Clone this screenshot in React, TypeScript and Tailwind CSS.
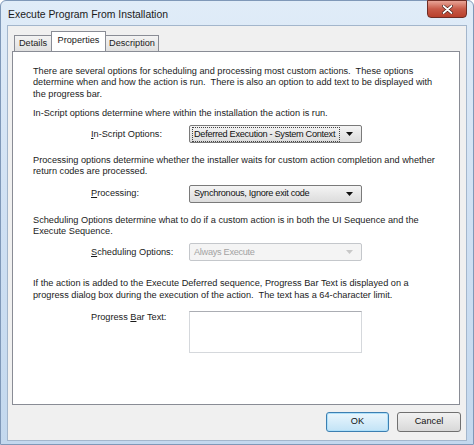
import React from "react";

const font = { fontFamily: '"Liberation Sans", Arial, sans-serif' };

const Combo = ({ value, disabled, focused }: { value: string; disabled?: boolean; focused?: boolean }) => (
  <div
    className={
      "flex items-center w-[173px] h-[18px] rounded-[2px] border pl-[3px] pr-[8px] " +
      (disabled
        ? "border-[#c4c7cb] bg-[#f4f4f4] text-[#a3a3a3]"
        : "border-[#7a7a7a] bg-gradient-to-b from-[#f4f4f4] to-[#dcdcdc] text-[#111]")
    }
  >
    <span
      className={
        "flex-1 min-w-0 overflow-hidden whitespace-nowrap leading-[13px] px-[1px] tracking-[-0.3px] " +
        (focused ? "outline outline-1 outline-dotted outline-[#444]" : "")
      }
    >
      {value}
    </span>
    <svg width="7" height="4" viewBox="0 0 7 4" className="ml-[7px] shrink-0">
      <path d="M0 0h7L3.5 4z" fill={disabled ? "#c8c8c8" : "#111"} />
    </svg>
  </div>
);

const Row = ({ children, label, mt }: { children: React.ReactNode; label: React.ReactNode; mt: string }) => (
  <div className={"flex items-center " + mt}>
    <span className="w-[176px] pl-[78px] whitespace-nowrap">{label}</span>
    {children}
  </div>
);

export default function App() {
  return (
    <div
      className="w-[474px] h-[445px] flex flex-col rounded-t-[6px] border border-[#7f98b8] bg-gradient-to-b from-[#e0ecf8] via-[#cfe0f3] to-[#c3d8ee] text-[9.2px] text-[#1b1b1b]"
      style={font}
    >
      {/* title bar */}
      <div className="flex items-start h-[24px] shrink-0 pl-[7px] pr-[6px]">
        <span className="mt-[6px] text-[10.4px] text-[#1a1a1a]">Execute Program From Installation</span>
        <div className="ml-auto -mt-px w-[40px] h-[18px] rounded-b-[4px] border border-[#6e2c24] bg-gradient-to-b from-[#e8a497] via-[#c85a48] to-[#b8402c] flex items-center justify-center">
          <svg width="11" height="9" viewBox="0 0 11 9">
            <path d="M1.5 1l8 7M9.5 1l-8 7" stroke="#3b1510" strokeWidth="3" strokeLinecap="round" />
            <path d="M1.5 1l8 7M9.5 1l-8 7" stroke="#fff" strokeWidth="1.8" strokeLinecap="round" />
          </svg>
        </div>
      </div>

      {/* client area */}
      <div className="flex-1 mx-[6px] mb-[3px] flex flex-col bg-[#f0f0f0] border border-[#a3b6cc] pl-[4px] pr-[5px]">
        {/* tabs */}
        <div className="flex items-end h-[19px] mt-[6px] pl-[2px] relative z-10">
          <div className="w-[38px] h-[17px] border border-[#898c95] bg-gradient-to-b from-[#f3f3f3] to-[#e0e0e0] flex items-center justify-center -mb-px">
            Details
          </div>
          <div className="w-[55px] h-[20px] -mx-px border border-b-0 border-[#898c95] bg-white flex items-center justify-center pb-[2px] relative">
            Properties
          </div>
          <div className="w-[54px] h-[17px] border border-[#898c95] bg-gradient-to-b from-[#f3f3f3] to-[#e0e0e0] flex items-center justify-center -mb-px">
            Description
          </div>
        </div>

        {/* panel */}
        <div className="w-[448px] h-[354px] border border-[#898c95] bg-white leading-[11.3px]">
          <p className="pl-[20px] pt-[14px] whitespace-pre">
            {"There are several options for scheduling and processing most custom actions.  These options\ndetermine when and how the action is run.  There is also an option to add text to be displayed with\nthe progress bar."}
          </p>
          <p className="pl-[20px] mt-[8px] whitespace-pre">
            In-Script options determine where within the installation the action is run.
          </p>
          <Row
            mt="mt-[6px]"
            label={
              <>
                <u>I</u>n-Script Options:
              </>
            }
          >
            <Combo value="Deferred Execution - System Context" focused />
          </Row>
          <p className="pl-[20px] mt-[12px] whitespace-pre">
            {"Processing options determine whether the installer waits for custom action completion and whether\nreturn codes are processed."}
          </p>
          <Row
            mt="mt-[7px]"
            label={
              <>
                <u>P</u>rocessing:
              </>
            }
          >
            <Combo value="Synchronous, Ignore exit code" />
          </Row>
          <p className="pl-[20px] mt-[12px] whitespace-pre">
            {"Scheduling Options determine what to do if a custom action is in both the UI Sequence and the\nExecute Sequence."}
          </p>
          <Row
            mt="mt-[6px]"
            label={
              <>
                <u>S</u>cheduling Options:
              </>
            }
          >
            <Combo value="Always Execute" disabled />
          </Row>
          <p className="pl-[20px] mt-[17px] whitespace-pre">
            {"If the action is added to the Execute Deferred sequence, Progress Bar Text is displayed on a\nprogress dialog box during the execution of the action.  The text has a 64-character limit."}
          </p>
          <div className="flex items-start mt-[10px]">
            <span className="w-[176px] pl-[78px] pt-[1px] whitespace-nowrap">
              Progress <u>B</u>ar Text:
            </span>
            <div className="w-[173px] h-[42px] border border-[#d5d8dc] border-t-[#abadb3] bg-white" />
          </div>
        </div>

        {/* buttons */}
        <div className="flex justify-end gap-[8px] mt-[7px]">
          <button className="w-[63px] h-[20px] rounded-[3px] border border-[#3c7fb1] bg-gradient-to-b from-[#eaf6fd] to-[#c2e3f6] shadow-[inset_0_0_0_1px_#aee0fa] text-[#111]" style={font}>
            OK
          </button>
          <button className="w-[64px] h-[20px] rounded-[3px] border border-[#707070] bg-gradient-to-b from-[#f2f2f2] to-[#d8d8d8] text-[#111]" style={font}>
            Cancel
          </button>
        </div>
      </div>
    </div>
  );
}
